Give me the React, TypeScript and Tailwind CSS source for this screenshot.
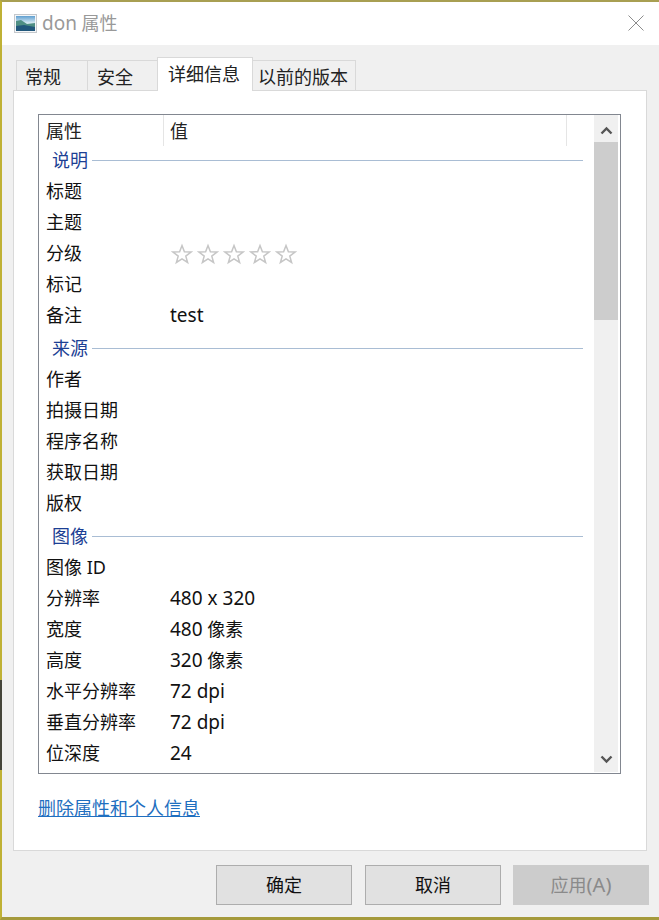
const FONT = "font-['Noto_Sans','Noto_Sans_CJK_SC',sans-serif]";

type Row = { name?: string; value?: string; unit?: string; group?: string; stars?: boolean };

const ROWS: Row[] = [
  { group: "说明" },
  { name: "标题" },
  { name: "主题" },
  { name: "分级", stars: true },
  { name: "标记" },
  { name: "备注", value: "test" },
  { group: "来源" },
  { name: "作者" },
  { name: "拍摄日期" },
  { name: "程序名称" },
  { name: "获取日期" },
  { name: "版权" },
  { group: "图像" },
  { name: "图像 ID" },
  { name: "分辨率", value: "480 x 320" },
  { name: "宽度", value: "480", unit: "像素" },
  { name: "高度", value: "320", unit: "像素" },
  { name: "水平分辨率", value: "72 dpi" },
  { name: "垂直分辨率", value: "72 dpi" },
  { name: "位深度", value: "24" },
];

function Star() {
  return (
    <svg width="22" height="22" viewBox="0 0 22 22" fill="none" stroke="#c6c6c6" strokeWidth="1.5">
      <path d="M11 2.5l2.4 6.2 6.6.3-5.2 4.1 1.8 6.4-5.6-3.7-5.6 3.7 1.8-6.4L2 9l6.6-.3z" />
    </svg>
  );
}

function FileIcon() {
  return (
    <svg width="23" height="19" viewBox="0 0 23 19">
      <defs>
        <linearGradient id="sky" x1="0" y1="0" x2="0" y2="1">
          <stop offset="0" stopColor="#5f9fd0" />
          <stop offset="0.45" stopColor="#d4e8f2" />
          <stop offset="1" stopColor="#eef6f8" />
        </linearGradient>
      </defs>
      <rect x="0.5" y="0.5" width="22" height="18" fill="#f4f6f8" stroke="#c4c8cc" />
      <rect x="2" y="2" width="19" height="15" fill="url(#sky)" />
      <path d="M2 7l5-1 6 4 8-1v8H2z" fill="#4f8f84" />
      <path d="M2 12l8-1 11 2v4H2z" fill="#22587c" />
    </svg>
  );
}

function Chevron({ down }: { down?: boolean }) {
  return (
    <svg width="13" height="9" viewBox="0 0 13 9" fill="none" stroke="#555" strokeWidth="2.4">
      <path d={down ? "M1.5 1.5l5 5 5-5" : "M1.5 7.5l5-5 5 5"} />
    </svg>
  );
}

function Tab({ label, active, className }: { label: string; active?: boolean; className: string }) {
  if (active) {
    return (
      <div className={`bg-white border border-b-0 border-[#d9d9d9] h-[34px] -mb-px relative z-10 flex items-center pb-[1px] text-[18px] text-[#222] ${className}`}>
        {label}
      </div>
    );
  }
  return (
    <div className={`bg-[#f0f0f0] border border-b-0 border-[#d9d9d9] h-[30px] flex items-center pt-[3px] text-[18px] text-[#222] ${className}`}>
      {label}
    </div>
  );
}

function Button({ label, suffix, disabled, className }: { label: string; suffix?: string; disabled?: boolean; className?: string }) {
  return (
    <div
      className={
        disabled
          ? `w-[136px] h-10 bg-[#cccccc] border border-[#cccccc] flex items-center justify-center text-[18px] text-[#8a8a8a] ${className ?? ""}`
          : `w-[136px] h-10 bg-[#e1e1e1] border border-[#adadad] flex items-center justify-center text-[18px] text-[#111] ${className ?? ""}`
      }
    >
      {label}
      {suffix && <span className="text-[20px]">{suffix}</span>}
    </div>
  );
}

export default function App() {
  return (
    <div className={`relative w-[659px] h-[920px] bg-[#f0f0f0] flex flex-col border-t-2 border-b-[3px] border-l-2 border-t-[#a89f52] border-b-[#a59a3c] border-l-[#bfb135] ${FONT}`}>
      {/* bit of the dark window behind, showing at the left edge */}
      <div className="absolute -left-[2px] top-[678px] w-[2px] h-[90px] bg-[#45453a]" />

      {/* title bar */}
      <div className="h-[43px] shrink-0 bg-white flex items-center pl-[12px] pr-[15px]">
        <FileIcon />
        <span className="ml-[5px] pb-[1px] text-[18px] text-[#999]">
          <span className="text-[19px]">don</span> 属性
        </span>
        <svg className="ml-auto mb-px" width="16" height="16" viewBox="0 0 16 16" stroke="#8c8c8c" strokeWidth="1">
          <path d="M0.5 0.5l15 15M15.5 0.5l-15 15" />
        </svg>
      </div>

      <div className="flex-1 flex flex-col pl-[11px] pr-[12px]">
        {/* tabs */}
        <div className="flex items-end h-[45px] pl-[3px] shrink-0">
          <Tab label="常规" className="w-[72px] pl-[8px]" />
          <Tab label="安全" className="w-[71px] pl-[9px] -ml-px" />
          <Tab label="详细信息" active className="w-[96px] pl-[10px] -ml-px" />
          <Tab label="以前的版本" className="w-[104px] pl-[5px] -ml-px" />
        </div>

        {/* panel */}
        <div className="h-[761px] bg-white border border-[#d9d9d9] pl-[24px] pr-[25px] pt-[23px] flex flex-col">
          <div className="h-[660px] border border-[#828790] flex shrink-0">
            <div className="flex-1 min-w-0">
              <div className="flex h-[31px] text-[18px] text-[#222]">
                <div className="w-[125px] pl-[7px] pt-[2px] border-r border-[#e5e5e5] flex items-center">属性</div>
                <div className="w-[403px] pl-[6px] pt-[2px] border-r border-[#e5e5e5] flex items-center">值</div>
              </div>
              {ROWS.map((r) =>
                r.group ? (
                  <div
                    key={r.group}
                    className={`flex items-center pl-[13px] pr-[11px] text-[18px] text-[#1c3f94] ${r.group === "说明" ? "h-[30px] pb-[2px]" : "h-[33px] pt-[2px]"}`}
                  >
                    <span>{r.group}</span>
                    <div className="flex-1 h-px bg-[#a9bdd4] ml-[4px]" />
                  </div>
                ) : (
                  <div key={r.name} className="flex items-center h-[31px] text-[18px] text-[#111]">
                    <div className="w-[131px] pl-[7px] shrink-0">{r.name}</div>
                    {r.stars ? (
                      <div className="flex gap-[4px] ml-[1px]">
                        {[0, 1, 2, 3, 4].map((i) => (
                          <Star key={i} />
                        ))}
                      </div>
                    ) : (
                      <div>
                        <span className="text-[19px]">{r.value}</span>
                        {r.unit && <span> {r.unit}</span>}
                      </div>
                    )}
                  </div>
                ),
              )}
            </div>
            {/* scrollbar */}
            <div className="w-[24px] mr-[2px] mb-px shrink-0 flex flex-col bg-[#f0f0f0]">
              <div className="h-[27px] pt-[4px] flex items-center justify-center">
                <Chevron />
              </div>
              <div className="h-[178px] bg-[#cdcdcd]" />
              <div className="flex-1" />
              <div className="h-[27px] pt-[1px] flex items-center justify-center">
                <Chevron down />
              </div>
            </div>
          </div>
          <div className="mt-[21px] text-[18px] leading-[26px] text-[#1f6fc0] underline">删除属性和个人信息</div>
        </div>

        {/* buttons */}
        <div className="flex justify-end mt-[14px] -mr-[2px]">
          <Button label="确定" className="mr-[13px]" />
          <Button label="取消" className="mr-[12px]" />
          <Button label="应用" suffix="(A)" disabled />
        </div>
      </div>
    </div>
  );
}
